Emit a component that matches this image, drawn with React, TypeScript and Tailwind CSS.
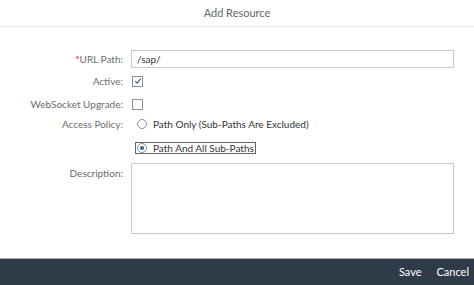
import { useState } from "react";

const font = { fontFamily: '"Lato", "Open Sans", "Liberation Sans", sans-serif' };

const Label = ({ children, required }: { children: string; required?: boolean }) => (
  <div className="w-[131px] shrink-0 pr-[8px] text-right text-[10px] text-[#6a6d70]">
    {required && <span className="text-[#e00000]">*</span>}
    {children}
  </div>
);

const Checkbox = ({ checked }: { checked: boolean }) => (
  <span className="ml-[1px] flex h-[11px] w-[11px] items-center justify-center border border-[#89919a] bg-white">
    {checked && (
      <svg width="8" height="8" viewBox="0 0 8 8">
        <path d="M1.2 4.2 L3.2 6.2 L6.8 1.6" fill="none" stroke="#346187" strokeWidth="1.1" />
      </svg>
    )}
  </span>
);

const Radio = ({ checked, label, focused }: { checked: boolean; label: string; focused?: boolean }) => (
  <div
    className={
      "flex items-center gap-[6px] " +
      (focused ? "ml-[4px] h-[12px] border border-[#666666] pl-[1px] pr-[1px]" : "ml-[6px]")
    }
  >
    <span className="flex h-[10px] w-[10px] items-center justify-center rounded-full border border-[#89919a] bg-white">
      {checked && <span className="h-[4px] w-[4px] rounded-full bg-[#346187]" />}
    </span>
    <span className="text-[10px] text-[#333333]">{label}</span>
  </div>
);

export default function App() {
  const [path] = useState("/sap/");

  return (
    <div className="flex h-[285px] w-[474px] flex-col bg-white" style={font}>
      <div className="flex h-[27px] items-center justify-center border-b border-[#ececec] text-[11px] text-[#666666]">
        Add Resource
      </div>

      <div className="flex flex-col pt-[23px] pr-[20px]">
        <div className="flex h-[18px] items-center">
          <Label required>URL Path:</Label>
          <div className="flex h-[18px] flex-1 items-center border border-[#c8c8c8] px-[5px] text-[10px] text-[#333333]">
            {path}
          </div>
        </div>

        <div className="mt-[4px] flex h-[18px] items-center">
          <Label>Active:</Label>
          <Checkbox checked />
        </div>

        <div className="mt-[5px] flex h-[18px] items-center">
          <Label>WebSocket Upgrade:</Label>
          <Checkbox checked={false} />
        </div>

        <div className="mt-[2px] flex h-[18px] items-center">
          <Label>Access Policy:</Label>
          <Radio checked={false} label="Path Only (Sub-Paths Are Excluded)" />
        </div>

        <div className="mt-[6px] flex h-[18px] items-center">
          <div className="w-[131px] shrink-0" />
          <Radio checked focused label="Path And All Sub-Paths" />
        </div>

        <div className="mt-[6px] flex items-start">
          <div className="pt-[3px]">
            <Label>Description:</Label>
          </div>
          <div className="h-[71px] flex-1 border border-[#c8c8c8]" />
        </div>
      </div>

      <div className="mt-auto flex h-[27px] items-center justify-end gap-[15px] border-t border-[#aab2ba] bg-[#2f3b48] pr-[5px] text-[11px] text-white">
        <span>Save</span>
        <span>Cancel</span>
      </div>
    </div>
  );
}
